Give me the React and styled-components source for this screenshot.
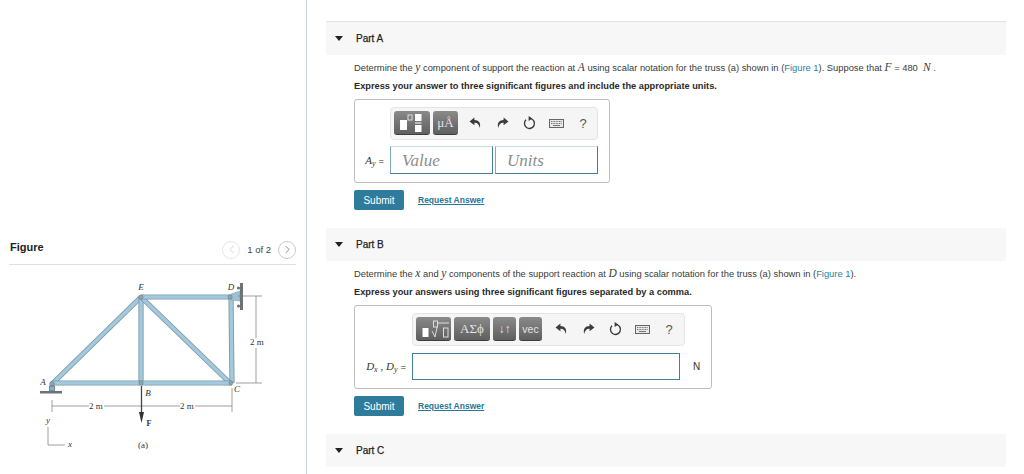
import React from "react";
import styled, { createGlobalStyle } from "styled-components";
import { ChevronLeft, ChevronRight } from "lucide-react";

const Global = createGlobalStyle`
  html, body { margin: 0; padding: 0; height: 474px; overflow: hidden; background: #fff; }
  body { font-family: "Liberation Sans", Arial, sans-serif; color: #2b2b2b; font-size: 9.5px; }
  * { box-sizing: border-box; }
`;
const Page = styled.div`display: flex; width: 1024px; height: 474px;`;
const FigurePanel = styled.aside`
  width: 307px; height: 474px; padding: 238px 10px 0 9px;
  border-right: 1px solid #c5d5e2;
`;
const FigureHead = styled.div`
  display: flex; align-items: center; justify-content: space-between;
  height: 27px; border-bottom: 1px solid #dde1e5; padding-bottom: 3px;
`;
const FigureTitle = styled.h2`margin: 0 0 6px 1px; font-size: 11px; font-weight: 700; color: #1d1d1d;`;
const Pager = styled.div`display: flex; align-items: center; gap: 7px; font-size: 9.5px; color: #444;`;
const PageBtn = styled.span`
  width: 18px; height: 18px; border-radius: 50%; display: flex; align-items: center; justify-content: center;
  border: 1px solid ${p => (p.$off ? "#e6e6e6" : "#c6ccd2")};
  color: ${p => (p.$off ? "#b9b9b9" : "#555")};
`;
const Drawing = styled.svg`display: block; width: 288px; height: 200px;`;
const Main = styled.main`flex: 1; padding: 21px 18px 0 19px; display: flex; flex-direction: column;`;
const Part = styled.section`margin-bottom: ${p => p.$gap || 18}px;`;
const PartHead = styled.div`
  height: ${p => (p.$rule ? 34 : 33)}px; background: #f7f7f7; display: flex; align-items: center;
  border-top: ${p => (p.$rule ? "1px solid #e2e2e2" : "0")};
  padding-left: 9px; gap: 13px;
  font-size: 10px; font-weight: 400; color: #1e1e1e; -webkit-text-stroke: 0.25px #1e1e1e;
`;
const Caret = styled.span`
  width: 0; height: 0; border-left: 4px solid transparent; border-right: 4px solid transparent;
  border-top: 5px solid #222;
`;
const Body = styled.div`padding-left: 28px;`;
const Question = styled.p`margin: 6px 0 0; height: 13px; line-height: 13px; font-size: 9.35px; color: #3a3a3a; white-space: nowrap;`;
const Instruction = styled.p`margin: 6px 0 0; height: 13px; line-height: 13px; font-size: 9.25px; font-weight: 700; color: #2a2a2a; white-space: nowrap;`;
const M = styled.i`font-family: "Liberation Serif", serif; font-size: ${p => p.$s || 11.5}px; font-style: italic;`;
const Sub = styled.i`font-size: 8px; font-style: italic; position: relative; top: 2px;`;
const LinkText = styled.span`color: #2a7f9e;`;
const Answer = styled.div`
  width: ${p => p.$w}px; height: 84px; margin-top: 6px; border: 1px solid #bdbdbd; border-radius: 3px;
  display: grid; grid-template-columns: ${p => p.$label}px 1fr; grid-template-rows: 33px 28px;
  row-gap: 6px; padding-top: 7px;
`;
const Toolbar = styled.div`
  grid-column: 2; justify-self: start; width: ${p => p.$w}px; height: 33px; display: flex; align-items: flex-start;
  background: #f5f5f5; border: 1px solid #e4e4e4; border-radius: 4px; padding: 3px 0 0 3px; gap: 3px;
`;
const Tool = styled.span`
  flex: none; width: ${p => p.$w}px; height: 24px; border-radius: 3px; display: flex; align-items: center; justify-content: center;
  background: linear-gradient(#8a8a8a, #5f5f5f); border-bottom: 1px solid #3d3d3d; color: #e4e4e4;
  font-family: ${p => (p.$sans ? '"Liberation Sans", sans-serif' : '"Liberation Serif", serif')}; font-size: ${p => p.$fs || 12}px;
`;
const Action = styled.span`
  flex: none; width: 24px; height: 24px; display: flex; align-items: center; justify-content: center;
  color: #555; font-size: 13px; margin-left: ${p => p.$ml || 0}px;
`;
const Label = styled.div`
  grid-row: 2; grid-column: 1; display: flex; align-items: center; justify-content: flex-end;
  padding-right: 6px; font-size: 9.5px; color: #333; white-space: nowrap; gap: 3px;
`;
const Fields = styled.div`grid-row: 2; grid-column: 2; display: flex; gap: 2px; align-items: ${p => (p.$center ? "center" : "stretch")};`;
const Field = styled.div`
  width: ${p => p.$w}px; height: ${p => p.$h || 28}px; background: #fff; border: 1px solid #3f7f99; border-top-color: #c9dbe3; border-left-color: #7fabbd;
  padding: 1px 0 0 11px; display: flex; align-items: center;
  font-family: "Liberation Serif", serif; font-style: italic; font-size: 17px; color: #8d8d8d;
`;
const WideField = styled(Field)`border: 1px solid #3f7f99;`;
const Unit = styled.span`margin-left: 11px; font-size: 10px; color: #333;`;
const Buttons = styled.div`display: flex; align-items: center; gap: 14px; margin-top: 7px;`;
const Submit = styled.span`
  width: 50px; height: 20px; background: #2f7b9c; border-radius: 2px; color: #fff; font-size: 10px;
  display: flex; align-items: center; justify-content: center;
`;
const RequestLink = styled.span`font-size: 8.5px; font-weight: 700; color: #2a7596; text-decoration: underline;`;

const Undo = () => (
  <svg width="13" height="12" viewBox="0 0 12 11"><path d="M5 0.5 L0.5 4 L5 7.5 V5.2 C7.5 5 9 6.2 10 10 C11.2 5.5 9 2.8 5 2.8 Z" fill="#3c3c3c" /></svg>
);
const Redo = () => (
  <svg width="13" height="12" viewBox="0 0 12 11"><path d="M7 0.5 L11.5 4 L7 7.5 V5.2 C4.5 5 3 6.2 2 10 C0.8 5.5 3 2.8 7 2.8 Z" fill="#3c3c3c" /></svg>
);
const Reload = () => (
  <svg width="13" height="14" viewBox="0 0 13 14" fill="none"><path d="M7.8 2.6 A5 5 0 1 1 3 3.8" stroke="#3a3a3a" strokeWidth="1.4" /><path d="M5.6 0 L9.4 2.6 L5.6 5 Z" fill="#3a3a3a" /></svg>
);
const Keyboard = () => (
  <svg width="15" height="9" viewBox="0 0 15 9"><rect x="0.5" y="0.5" width="14" height="8" fill="#e8e8e8" stroke="#666" /><path d="M2 2.5h11M2 4.5h11" stroke="#777" strokeDasharray="1 .6" /><path d="M4 6.5h7" stroke="#777" /></svg>
);
const Templates1 = () => (
  <svg width="30" height="20" viewBox="0 0 30 20"><rect x="3" y="7" width="7" height="10" fill="#fff" /><rect x="11" y="2" width="4" height="5" fill="none" stroke="#ddd" /><rect x="18" y="1" width="6.5" height="7" fill="#fff" /><rect x="18" y="9.5" width="6.5" height="1" fill="#fff" /><rect x="18" y="12" width="6.5" height="7" fill="#fff" /></svg>
);
const Templates2 = () => (
  <svg width="30" height="20" viewBox="0 0 30 20" fill="none"><rect x="3.5" y="9" width="6" height="9" fill="#fff" /><rect x="14.5" y="2" width="4" height="6" stroke="#ddd" /><path d="M13 12 L16 18 L19 4 H30" stroke="#ddd" /><rect x="24.5" y="9" width="4.5" height="9" stroke="#ddd" /></svg>
);

const Member = ({ d }) => (
  <g fill="none" strokeLinecap="butt">
    <path d={d} stroke="#7e98a6" strokeWidth="5.2" />
    <path d={d} stroke="#a3c9dd" strokeWidth="3.4" />
  </g>
);
const Dim = ({ d }) => <path d={d} fill="none" stroke="#777" strokeWidth="0.7" />;
const T = styled.text`font-family: "Liberation Serif", serif; font-size: ${p => p.$s || 9}px; fill: #333; font-style: ${p => (p.$it ? "italic" : "normal")}; font-weight: ${p => (p.$b ? 700 : 400)}; text-anchor: middle;`;

const Truss = () => (
  <Drawing viewBox="9 265 288 200">
    <defs><filter id="soft"><feGaussianBlur stdDeviation="0.3" /></filter></defs>
    <g filter="url(#soft)">
      <Member d="M52 384 L141 297" />
      <Member d="M141 297 L141 383" />
      <Member d="M141 297 L231 384" />
      <Member d="M141 297 L231 297" />
      <Member d="M231 297 L232 383" />
      <Member d="M52 383 L232 383" />
      <path d="M231 294 L240 291 V301 L231 300 Z" fill="#9cc0d3" stroke="#7e98a6" strokeWidth="0.5" />
      <rect x="240" y="283" width="3" height="27" fill="#6c7377" />
      <circle cx="238.5" cy="288" r="1.6" fill="#6c7377" />
      <circle cx="238.5" cy="306" r="1.6" fill="#6c7377" />
      <circle cx="141" cy="297" r="2.2" fill="#8ba6b5" stroke="#666" strokeWidth="0.4" />
      <circle cx="230" cy="297" r="2.2" fill="#8ba6b5" stroke="#666" strokeWidth="0.4" />
      <circle cx="141" cy="383" r="2.2" fill="#8ba6b5" stroke="#666" strokeWidth="0.4" />
      <circle cx="231" cy="383" r="2" fill="#8ba6b5" stroke="#666" strokeWidth="0.4" />
      <circle cx="52" cy="384" r="2.4" fill="#8ba6b5" stroke="#666" strokeWidth="0.4" />
      <rect x="49.5" y="386" width="5" height="5" fill="#7fb4d0" stroke="#555" strokeWidth="0.6" />
      <rect x="40" y="391" width="22" height="2.5" fill="#6c7377" />
      <Dim d="M52 400 V412 M52 406 H89 M104 406 H180 M195 406 H232 M232 388 V412" />
      <Dim d="M238 296 H262 M236 383 H262 M256 296 V338 M256 348 V383" />
      <Dim d="M48 427 V445 H65" />
      <path d="M141.5 386 V414" stroke="#444" strokeWidth="1.3" />
      <path d="M139 412 H144 L141.5 423 Z" fill="#333" />
    </g>
    <T $it x="141" y="290">E</T>
    <T $it x="231" y="290">D</T>
    <T $it x="43" y="385">A</T>
    <T $it x="148" y="396">B</T>
    <T $it x="237" y="392">C</T>
    <T x="96" y="409">2 m</T>
    <T x="187" y="409">2 m</T>
    <T x="257" y="345">2 m</T>
    <T $s={8} $b x="149" y="426">F</T>
    <T $it x="48" y="423">y</T>
    <T $it x="70" y="447">x</T>
    <T x="143" y="448">(a)</T>
  </Drawing>
);

export default function App() {
  return (
    <Page>
      <Global />
      <FigurePanel>
        <FigureHead>
          <FigureTitle>Figure</FigureTitle>
          <Pager>
            <PageBtn $off><ChevronLeft size={13} strokeWidth={1.2} /></PageBtn>
            <span>1 of 2</span>
            <PageBtn><ChevronRight size={13} strokeWidth={1.2} /></PageBtn>
          </Pager>
        </FigureHead>
        <Truss />
      </FigurePanel>
      <Main>
        <Part>
          <PartHead $rule><Caret />Part A</PartHead>
          <Body>
            <Question>Determine the <M>y</M> component of support the reaction at <M>A</M> using scalar notation for the truss (a) shown in (<LinkText>Figure 1</LinkText>). Suppose that <M>F</M> = 480 &nbsp;<M>N</M> .</Question>
            <Instruction>Express your answer to three significant figures and include the appropriate units.</Instruction>
            <Answer $w={256} $label={35}>
              <Toolbar $w={208}>
                <Tool $w={36}><Templates1 /></Tool>
                <Tool $w={25} $fs={13}>μÅ</Tool>
                <Action $ml={2}><Undo /></Action>
                <Action><Redo /></Action>
                <Action><Reload /></Action>
                <Action><Keyboard /></Action>
                <Action>?</Action>
              </Toolbar>
              <Label><M $s={11}>A<Sub>y</Sub></M> =</Label>
              <Fields>
                <Field $w={103}>Value</Field>
                <Field $w={103}>Units</Field>
              </Fields>
            </Answer>
            <Buttons><Submit>Submit</Submit><RequestLink>Request Answer</RequestLink></Buttons>
          </Body>
        </Part>
        <Part>
          <PartHead><Caret />Part B</PartHead>
          <Body>
            <Question>Determine the <M>x</M> and <M>y</M> components of the support reaction at <M>D</M> using scalar notation for the truss (a) shown in (<LinkText>Figure 1</LinkText>).</Question>
            <Instruction>Express your answers using three significant figures separated by a comma.</Instruction>
            <Answer $w={358} $label={57}>
              <Toolbar $w={273}>
                <Tool $w={35}><Templates2 /></Tool>
                <Tool $w={36} $fs={13}>ΑΣϕ</Tool>
                <Tool $w={23} $sans $fs={12}>↓↑</Tool>
                <Tool $w={23} $sans $fs={10.5}>vec</Tool>
                <Action $ml={4}><Undo /></Action>
                <Action><Redo /></Action>
                <Action><Reload /></Action>
                <Action><Keyboard /></Action>
                <Action>?</Action>
              </Toolbar>
              <Label><M $s={11}>D<Sub>x</Sub> , D<Sub>y</Sub></M> =</Label>
              <Fields $center>
                <WideField $w={268} $h={27} />
                <Unit>N</Unit>
              </Fields>
            </Answer>
            <Buttons><Submit>Submit</Submit><RequestLink>Request Answer</RequestLink></Buttons>
          </Body>
        </Part>
        <Part $gap={0}>
          <PartHead><Caret />Part C</PartHead>
        </Part>
      </Main>
    </Page>
  );
}
